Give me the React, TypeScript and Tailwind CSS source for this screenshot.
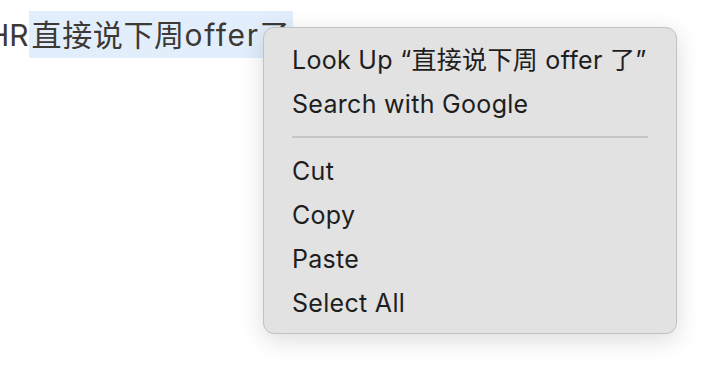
const items = ['Cut', 'Copy', 'Paste', 'Select All'];

export default function App() {
  return (
    <div
      className="relative w-[708px] h-[372px] bg-white overflow-hidden"
      style={{ fontFamily: '"Inter", "Noto Sans CJK SC", sans-serif' }}
    >
      {/* selected text */}
      <div className="flex items-center h-[47px] mt-[11px] -ml-[13px] text-[30px] text-[#3d3934] leading-none">
        <span>HR</span>
        <span className="flex items-center h-full bg-[#e2eefc] pl-[3px] pr-[3px] tracking-[0.6px]">
          直接说下周<span className="tracking-[1.6px]">offer</span>了
        </span>
      </div>

      {/* context menu */}
      <div className="absolute left-[263px] top-[27px] w-[414px] h-[307px] rounded-[11px] bg-[#e2e2e2] border border-[#c2c2c2] shadow-[0_6px_24px_rgba(0,0,0,0.14)] pt-[11px] text-[25px] tracking-[0.3px] text-[#1e1e1e]">
        <div className="px-[28px] h-[44px] flex items-center">Look Up “直接说下周 offer 了”</div>
        <div className="px-[28px] h-[44px] flex items-center">Search with Google</div>
        <div className="mx-[28px] mt-[9px] mb-[12px] h-[2px] bg-[#c6c6c6]" />
        {items.map((item) => (
          <div key={item} className="px-[28px] h-[44px] flex items-center">
            {item}
          </div>
        ))}
      </div>
    </div>
  );
}
